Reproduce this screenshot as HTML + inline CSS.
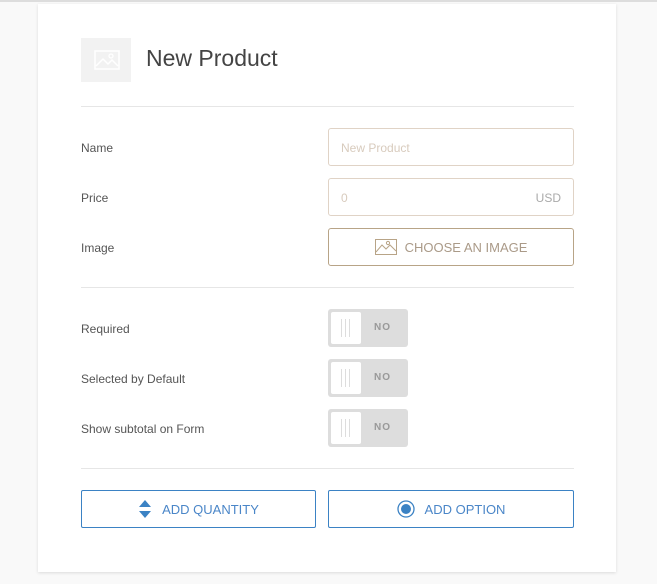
<!DOCTYPE html>
<html><head><meta charset="utf-8"><style>
*{box-sizing:border-box;margin:0;padding:0}
body{width:657px;height:584px;background:#f9f9f9;font-family:"Liberation Sans",sans-serif;position:relative;overflow:hidden}
.card{position:absolute;left:38px;top:4px;width:578px;height:568px;background:#fff;box-shadow:0 1px 3px rgba(0,0,0,.12)}
.abs{position:absolute}
.lbl{position:absolute;left:81px;font-size:12px;color:#555}
.hr{position:absolute;left:81px;width:493px;height:1px;background:#e6e6e6}
.inp{position:absolute;left:328px;width:246px;height:38px;border:1px solid #e0d3c6;border-radius:3px;font-size:12px;color:#d8cbbd;padding:12px}
.tog{position:absolute;left:328px;width:80px;height:38px;background:#ddd;border-radius:3px}
.tog .k{position:absolute;left:3px;top:3px;width:30px;height:32px;background:#fff;border-radius:2px}
.tog .k i{position:absolute;top:7px;width:1px;height:18px;background:#ddd}
.tog span{position:absolute;left:46px;top:13px;font-size:10px;font-weight:bold;color:#999;letter-spacing:1px}
.btn{position:absolute;top:490px;height:38px;border:1px solid #3b82c4;border-radius:2px;color:#4a86c8;font-size:13px;display:flex;align-items:center;justify-content:center;gap:10px}
</style></head><body>
<div class="abs" style="left:0;top:0;width:657px;height:2px;background:#ddd"></div>
<div class="card"></div>
<div class="abs" style="left:81px;top:38px;width:50px;height:44px;background:#f2f2f2"></div>
<svg class="abs" style="left:94px;top:50px" width="26" height="20" viewBox="0 0 26 20"><rect x="1" y="1" width="24" height="18" fill="none" stroke="#fff" stroke-width="1.5"/><path d="M2 16 L9 9 L14 14 L18 10 L24 16" fill="none" stroke="#fff" stroke-width="1.5"/><circle cx="17" cy="6" r="2" fill="none" stroke="#fff" stroke-width="1.3"/></svg>
<div class="abs" style="left:146px;top:45px;font-size:23px;color:#444">New Product</div>
<div class="hr" style="top:106px"></div>
<div class="lbl" style="top:141px">Name</div>
<div class="inp" style="top:128px">New Product</div>
<div class="lbl" style="top:191px">Price</div>
<div class="inp" style="top:178px">0<span style="float:right;color:#aaa">USD</span></div>
<div class="lbl" style="top:241px">Image</div>
<div class="inp" style="top:228px;border-color:#b8a487;color:#aa9a88;font-size:13px;display:flex;align-items:center;justify-content:center;gap:8px;padding:0">
<svg width="22" height="16" viewBox="0 0 22 16"><rect x="0.5" y="0.5" width="21" height="15" fill="none" stroke="#b8a487"/><path d="M1 13 L7 6 L11 10 L15 6 L21 12" fill="none" stroke="#b8a487"/><circle cx="13" cy="4" r="1.6" fill="none" stroke="#b8a487"/></svg>CHOOSE AN IMAGE</div>
<div class="hr" style="top:287px"></div>
<div class="lbl" style="top:322px">Required</div>
<div class="tog" style="top:309px"><div class="k"><i style="left:10px"></i><i style="left:14px"></i><i style="left:18px"></i></div><span>NO</span></div>
<div class="lbl" style="top:372px">Selected by Default</div>
<div class="tog" style="top:359px"><div class="k"><i style="left:10px"></i><i style="left:14px"></i><i style="left:18px"></i></div><span>NO</span></div>
<div class="lbl" style="top:422px">Show subtotal on Form</div>
<div class="tog" style="top:409px"><div class="k"><i style="left:10px"></i><i style="left:14px"></i><i style="left:18px"></i></div><span>NO</span></div>
<div class="hr" style="top:468px"></div>
<div class="btn" style="left:81px;width:235px"><svg width="14" height="20" viewBox="0 0 14 20"><path d="M7 1 L13 8 L1 8Z M7 19 L13 12 L1 12Z" fill="#3b82c4"/></svg>ADD QUANTITY</div>
<div class="btn" style="left:328px;width:246px"><svg width="18" height="18" viewBox="0 0 18 18"><circle cx="9" cy="9" r="8" fill="none" stroke="#3b82c4" stroke-width="1.3"/><circle cx="9" cy="9" r="5" fill="#3b82c4"/></svg>ADD OPTION</div>
</body></html>
